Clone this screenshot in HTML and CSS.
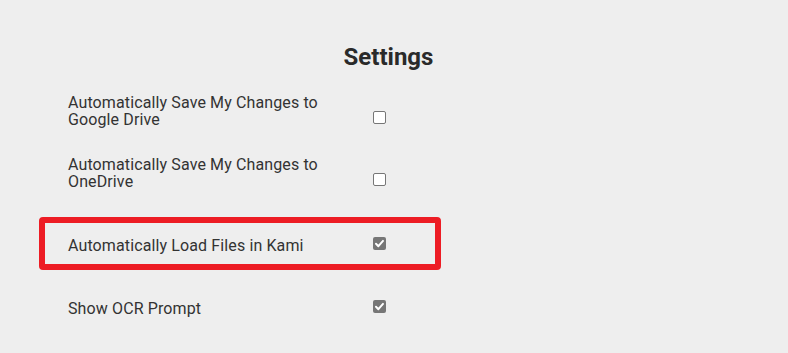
FILE: index.html
```html
<!DOCTYPE html>
<html>
<head>
<meta charset="utf-8">
<link rel="stylesheet" href="styles.css">
</head>
<body>
<main class="settings">
  <h1 class="title">Settings</h1>
  <div class="list">
    <div class="row">
      <label class="item">
        <span class="label">Automatically Save My Changes to<br>Google Drive</span>
        <span class="box"></span>
      </label>
    </div>
    <div class="row">
      <label class="item">
        <span class="label">Automatically Save My Changes to<br>OneDrive</span>
        <span class="box"></span>
      </label>
    </div>
    <div class="row highlight">
      <label class="item">
        <span class="label">Automatically Load Files in Kami</span>
        <span class="box checked"><svg viewBox="0 0 13 13" width="13" height="13"><path d="M3 6.8 L5.4 9.2 L10 3.9" fill="none" stroke="#fff" stroke-width="2" stroke-linecap="round" stroke-linejoin="round"/></svg></span>
      </label>
      <div class="mark"></div>
    </div>
    <div class="row last">
      <label class="item">
        <span class="label">Show OCR Prompt</span>
        <span class="box checked"><svg viewBox="0 0 13 13" width="13" height="13"><path d="M3 6.8 L5.4 9.2 L10 3.9" fill="none" stroke="#fff" stroke-width="2" stroke-linecap="round" stroke-linejoin="round"/></svg></span>
      </label>
    </div>
  </div>
</main>
</body>
</html>
```

FILE: styles.css
```css
html, body {
  margin: 0;
  padding: 0;
  background: #eeeeee;
}
body {
  font-family: Roboto, "Liberation Sans", sans-serif;
  color: #333333;
  height: 353px;
  overflow: hidden;
}
.settings {
  padding-top: 43px;
}
.title {
  margin: 0 0 9px 0;
  padding-right: 11px;
  text-align: center;
  font-size: 24px;
  line-height: 28px;
  font-weight: 700;
  color: #2a2a2a;
}
.list {
  display: flex;
  flex-direction: column;
}
.row {
  position: relative;
  height: 62px;
  display: flex;
  align-items: center;
  padding-left: 68px;
}
.row.highlight {
  margin-top: 10px;
}
.row.last {
  margin-top: 1px;
}
.item {
  display: flex;
  align-items: flex-end;
}
.label {
  width: 305px;
  font-size: 16px;
  line-height: 17px;
  letter-spacing: 0.12px;
}
.box {
  box-sizing: border-box;
  width: 13px;
  height: 13px;
  margin-bottom: 4px;
  border: 1px solid #767676;
  border-radius: 2px;
  background: #ffffff;
  display: flex;
}
.row.last .box {
  margin-bottom: 4px;
}
.box.checked {
  border: none;
  background: #767676;
}
.mark {
  position: absolute;
  left: 39px;
  top: 3px;
  width: 402px;
  height: 53px;
  box-sizing: border-box;
  border: 6px solid #ed1c24;
  border-radius: 4px;
}
```
